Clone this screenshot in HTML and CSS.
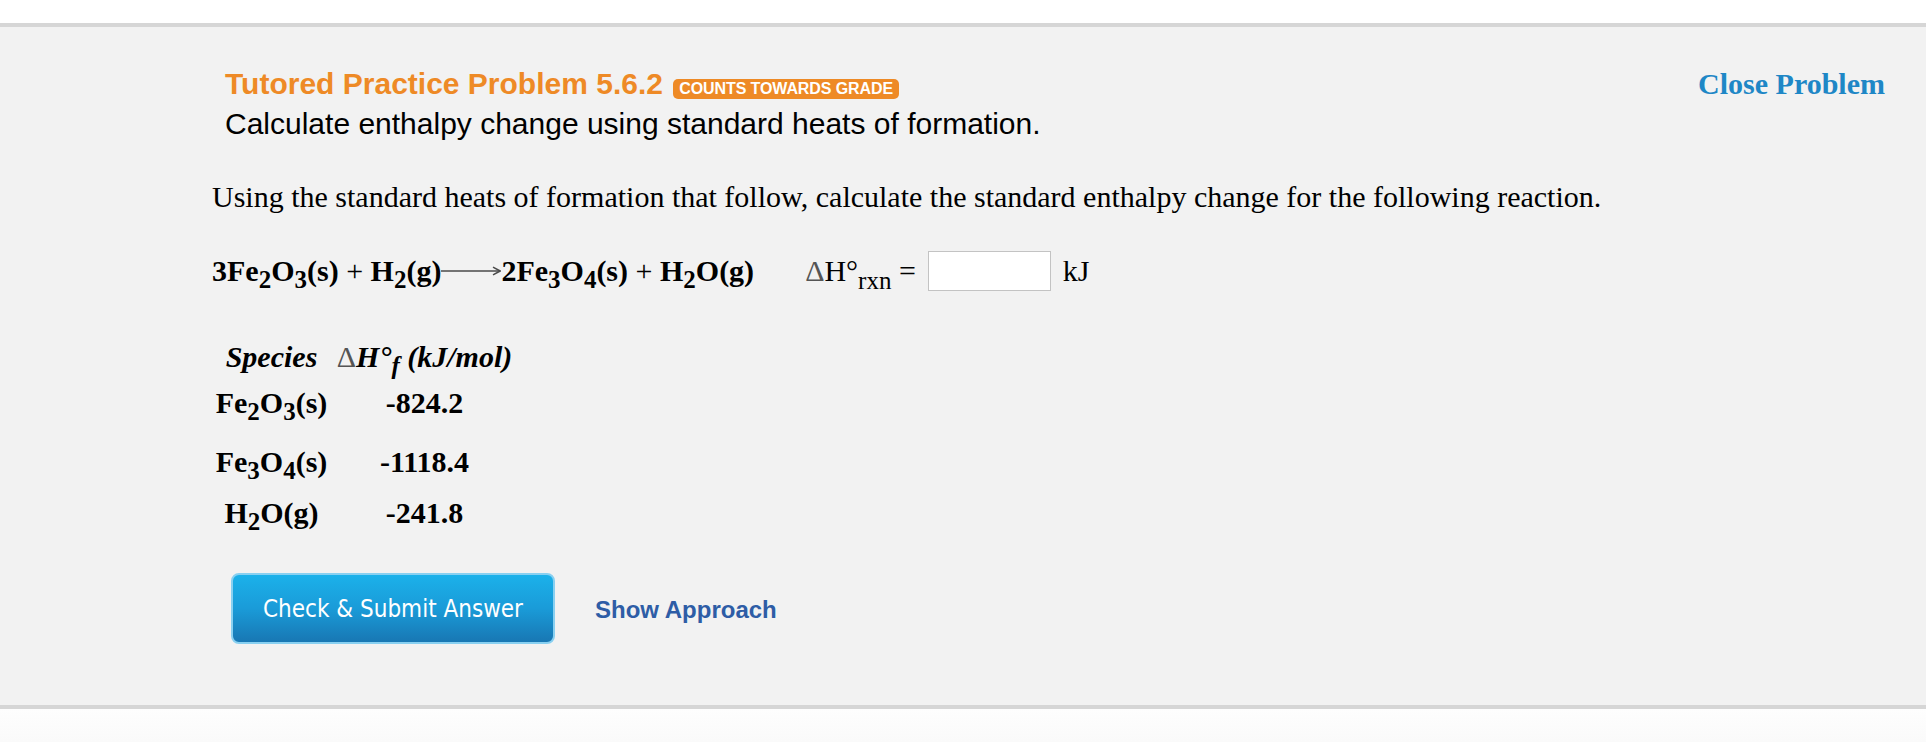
FILE: index.html
```html
<!DOCTYPE html>
<html lang="en">
<head>
<meta charset="utf-8">
<title>Tutored Practice Problem 5.6.2</title>
<link rel="stylesheet" href="styles.css">
</head>
<body>
<div class="topstrip"></div>
<section class="panel">
  <header class="head">
    <div class="head-text">
      <h1 class="title">Tutored Practice Problem 5.6.2 <span class="badge">COUNTS TOWARDS GRADE</span></h1>
      <p class="subtitle">Calculate enthalpy change using standard heats of formation.</p>
    </div>
    <a class="close" href="#">Close Problem</a>
  </header>

  <p class="prompt">Using the standard heats of formation that follow, calculate the standard enthalpy change for the following reaction.</p>

  <div class="equation">
    <span class="rxn">3Fe<sub>2</sub>O<sub>3</sub>(s) <span class="plus">+</span> H<sub>2</sub>(g)<svg class="arrow" width="60" height="12" viewBox="0 0 60 12" aria-hidden="true"><line x1="0" y1="6" x2="58" y2="6" stroke="#4a4a4a" stroke-width="1.6"/><path d="M52 2.2 L59.2 6 L52 9.8" fill="none" stroke="#4a4a4a" stroke-width="1.5" stroke-linejoin="miter"/></svg>2Fe<sub>3</sub>O<sub>4</sub>(s) <span class="plus">+</span> H<sub>2</sub>O(g)</span>
    <span class="dh"><span class="delta">Δ</span>H°<sub class="rxnsub">rxn</sub> =</span>
    <input class="answer" type="text" aria-label="answer">
    <span class="unit">kJ</span>
  </div>

  <div class="table">
    <div class="row r-head">
      <span class="c1 hd">Species</span>
      <span class="c2 hd"><span class="delta">Δ</span>H°<sub>f</sub> (kJ/mol)</span>
    </div>
    <div class="row r1">
      <span class="c1">Fe<sub>2</sub>O<sub>3</sub>(s)</span>
      <span class="c2">-824.2</span>
    </div>
    <div class="row r2">
      <span class="c1">Fe<sub>3</sub>O<sub>4</sub>(s)</span>
      <span class="c2">-1118.4</span>
    </div>
    <div class="row r3">
      <span class="c1">H<sub>2</sub>O(g)</span>
      <span class="c2">-241.8</span>
    </div>
  </div>

  <div class="actions">
    <button class="submit" type="button">Check &amp; Submit Answer</button>
    <a class="approach" href="#">Show Approach</a>
  </div>
</section>
<div class="bottomstrip"></div>
</body>
</html>
```
FILE: styles.css
```css
html, body {
  margin: 0;
  padding: 0;
  background: #ffffff;
}

body {
  font-family: "Liberation Serif", "Times New Roman", serif;
  color: #000;
}

.topstrip {
  height: 23px;
  background: #ffffff;
}

.panel {
  background: #f2f2f2;
  border-top: 4px solid #d6d6d6;
  border-bottom: 4px solid #d6d6d6;
  padding: 37px 41px 61px 212px;
}

.head {
  display: flex;
  justify-content: space-between;
  align-items: flex-start;
  padding-left: 13px;
}

.title {
  margin: 0;
  font-family: "Liberation Sans", Arial, sans-serif;
  font-weight: bold;
  font-size: 30px;
  line-height: 40px;
  color: #ee8a26;
}

.badge {
  display: inline-block;
  margin-left: 2px;
  padding: 0 6px;
  height: 20px;
  line-height: 20px;
  font-size: 16px;
  font-weight: bold;
  letter-spacing: -0.1px;
  color: #ffffff;
  background: #ee8a26;
  border-radius: 5px;
  vertical-align: baseline;
}

.subtitle {
  margin: 0;
  font-family: "Liberation Sans", Arial, sans-serif;
  font-size: 30px;
  line-height: 40px;
  color: #000;
}

.close {
  font-family: "Liberation Serif", "Times New Roman", serif;
  font-weight: bold;
  font-size: 30px;
  line-height: 40px;
  color: #1e87c6;
  text-decoration: none;
}

.prompt {
  margin: 35px 0 0 0;
  font-size: 30px;
  line-height: 36px;
}

sub {
  font-size: 25px;
  line-height: 0;
  vertical-align: -7px;
}

.equation {
  margin-top: 36px;
  display: flex;
  align-items: center;
  height: 40px;
  font-size: 30px;
  line-height: 36px;
}

.rxn {
  font-weight: bold;
  white-space: nowrap;
}

.plus {
  font-weight: normal;
}

.arrow {
  display: inline-block;
  vertical-align: 4px;
  width: 60px;
  height: 12px;
}

.dh {
  margin-left: 51px;
  white-space: nowrap;
}

.delta {
  color: #555;
  font-style: normal;
  font-weight: normal;
}

.rxnsub {
  font-size: 25px;
  vertical-align: -8px;
}

.answer {
  margin-left: 12px;
  width: 123px;
  height: 40px;
  box-sizing: border-box;
  border: 1px solid #c3c3c3;
  background: #ffffff;
  padding: 0 6px;
  font-size: 24px;
  font-family: "Liberation Serif", serif;
}

.unit {
  margin-left: 12px;
}

.table {
  margin-top: 48px;
  font-size: 30px;
  line-height: 36px;
  font-weight: bold;
}

.row {
  display: grid;
  grid-template-columns: 119px 187px;
  justify-items: center;
  align-items: baseline;
  height: 36px;
}

.hd {
  font-style: italic;
}

.hd sub {
  font-size: 25px;
}

.r1 { margin-top: 10px; }
.r2 { margin-top: 23px; }
.r3 { margin-top: 15px; }

.actions {
  margin-top: 42px;
  margin-left: 19px;
  display: flex;
  align-items: center;
}

.submit {
  width: 324px;
  height: 71px;
  box-sizing: border-box;
  border: 2px solid #88d0f1;
  border-radius: 8px;
  background: linear-gradient(to bottom, #1bb1ea 0%, #1a9bd8 50%, #1877b3 100%);
  color: #ffffff;
  font-family: "DejaVu Sans Condensed", "DejaVu Sans", sans-serif;
  font-stretch: condensed;
  font-size: 24px;
  padding: 0;
  cursor: pointer;
}

.approach {
  margin-left: 40px;
  padding-top: 3px;
  font-family: "Liberation Sans", Arial, sans-serif;
  font-weight: bold;
  font-size: 24px;
  color: #2e5da6;
  text-decoration: none;
}

.bottomstrip {
  height: 40px;
  background: linear-gradient(to bottom, #fefefe, #f9f9f9);
}
```
